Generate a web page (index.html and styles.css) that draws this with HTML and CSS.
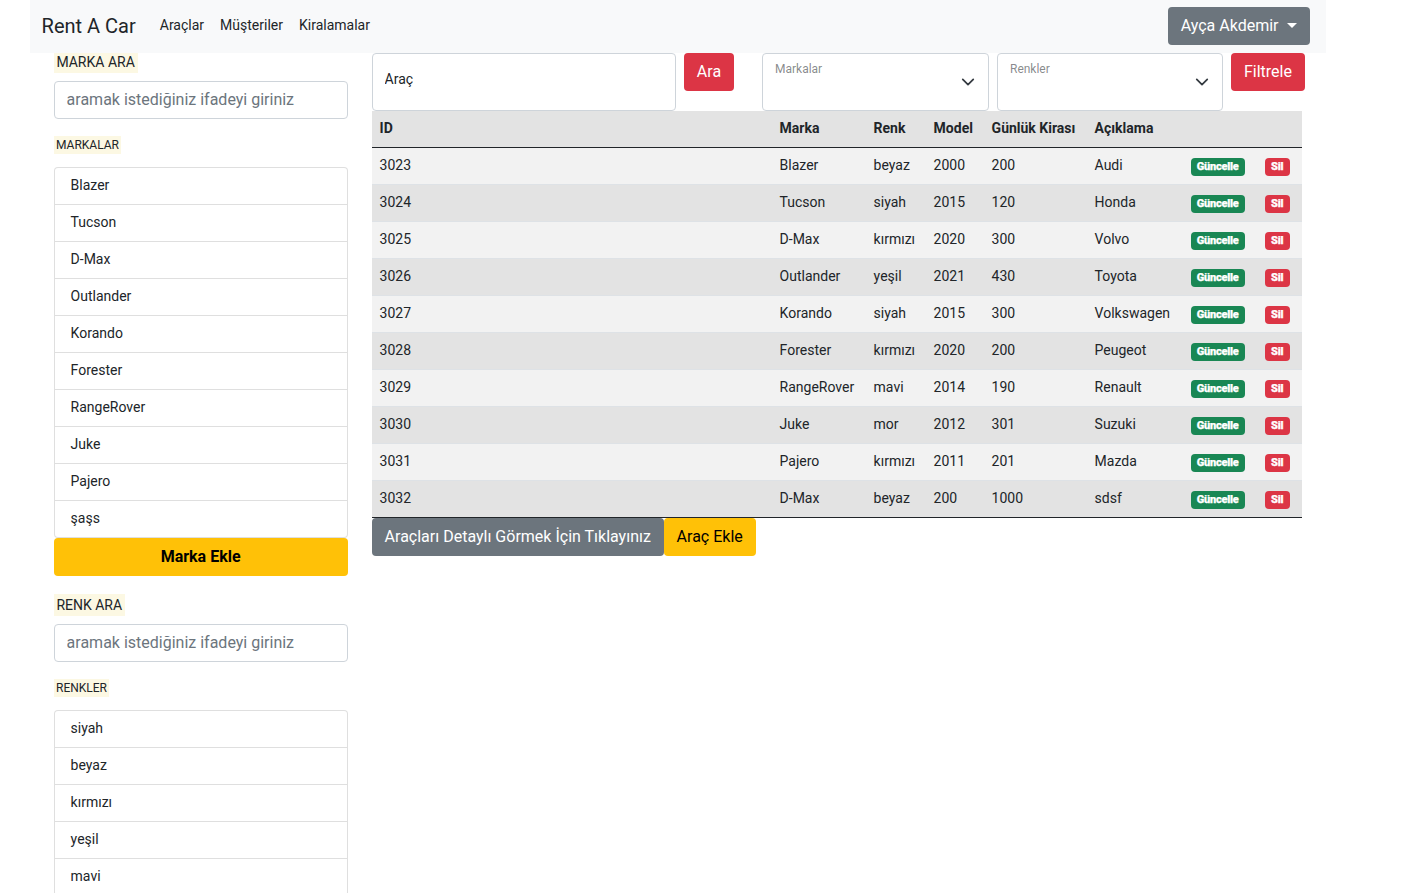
FILE: index.html
```html
<!DOCTYPE html>
<html lang="tr">
<head>
<meta charset="utf-8">
<title>Rent A Car</title>
<link rel="stylesheet" href="styles.css">
</head>
<body>
<div class="page">
  <nav class="navbar">
    <a class="brand">Rent A Car</a>
    <div class="nav-links"><a>Araçlar</a><a>Müşteriler</a><a>Kiralamalar</a></div>
    <button class="btn btn-grey user-btn">Ayça Akdemir<span class="caret"></span></button>
  </nav>
  <div class="content">
    <aside class="sidebar">
      <label class="field-label"><mark>MARKA ARA</mark></label>
      <input class="search" placeholder="aramak istediğiniz ifadeyi giriniz">
      <div class="sub-label"><mark>MARKALAR</mark></div>
      <ul class="list">
        <li>Blazer</li><li>Tucson</li><li>D-Max</li><li>Outlander</li><li>Korando</li><li>Forester</li><li>RangeRover</li><li>Juke</li><li>Pajero</li><li>şaşs</li>
      </ul>
      <button class="btn btn-yellow add-brand">Marka Ekle</button>
      <label class="field-label second"><mark>RENK ARA</mark></label>
      <input class="search" placeholder="aramak istediğiniz ifadeyi giriniz">
      <div class="sub-label"><mark>RENKLER</mark></div>
      <ul class="list">
        <li>siyah</li><li>beyaz</li><li>kırmızı</li><li>yeşil</li><li>mavi</li>
      </ul>
    </aside>
    <main class="main">
      <div class="filters">
        <input class="car-input" value="Araç">
        <button class="btn btn-red btn-search">Ara</button>
        <div class="select first-select"><span class="select-label">Markalar</span>
          <svg class="chevron" viewBox="0 0 16 16"><path d="m2 5 6 6 6-6" fill="none" stroke="#343a40" stroke-width="2" stroke-linecap="round" stroke-linejoin="round"/></svg></div>
        <div class="select"><span class="select-label">Renkler</span>
          <svg class="chevron" viewBox="0 0 16 16"><path d="m2 5 6 6 6-6" fill="none" stroke="#343a40" stroke-width="2" stroke-linecap="round" stroke-linejoin="round"/></svg></div>
        <button class="btn btn-red btn-filter">Filtrele</button>
      </div>
      <table class="cars">
        <colgroup>
          <col class="c-id"><col class="c-brand"><col class="c-color"><col class="c-model"><col class="c-rent"><col class="c-desc"><col class="c-upd"><col class="c-del">
        </colgroup>
        <thead>
          <tr><th>ID</th><th>Marka</th><th>Renk</th><th>Model</th><th>Günlük Kirası</th><th>Açıklama</th><th></th><th></th></tr>
        </thead>
        <tbody>
          <tr><td>3023</td><td>Blazer</td><td>beyaz</td><td>2000</td><td>200</td><td>Audi</td><td><a class="tag tag-green">Güncelle</a></td><td><a class="tag tag-red">Sil</a></td></tr>
          <tr><td>3024</td><td>Tucson</td><td>siyah</td><td>2015</td><td>120</td><td>Honda</td><td><a class="tag tag-green">Güncelle</a></td><td><a class="tag tag-red">Sil</a></td></tr>
          <tr><td>3025</td><td>D-Max</td><td>kırmızı</td><td>2020</td><td>300</td><td>Volvo</td><td><a class="tag tag-green">Güncelle</a></td><td><a class="tag tag-red">Sil</a></td></tr>
          <tr><td>3026</td><td>Outlander</td><td>yeşil</td><td>2021</td><td>430</td><td>Toyota</td><td><a class="tag tag-green">Güncelle</a></td><td><a class="tag tag-red">Sil</a></td></tr>
          <tr><td>3027</td><td>Korando</td><td>siyah</td><td>2015</td><td>300</td><td>Volkswagen</td><td><a class="tag tag-green">Güncelle</a></td><td><a class="tag tag-red">Sil</a></td></tr>
          <tr><td>3028</td><td>Forester</td><td>kırmızı</td><td>2020</td><td>200</td><td>Peugeot</td><td><a class="tag tag-green">Güncelle</a></td><td><a class="tag tag-red">Sil</a></td></tr>
          <tr><td>3029</td><td>RangeRover</td><td>mavi</td><td>2014</td><td>190</td><td>Renault</td><td><a class="tag tag-green">Güncelle</a></td><td><a class="tag tag-red">Sil</a></td></tr>
          <tr><td>3030</td><td>Juke</td><td>mor</td><td>2012</td><td>301</td><td>Suzuki</td><td><a class="tag tag-green">Güncelle</a></td><td><a class="tag tag-red">Sil</a></td></tr>
          <tr><td>3031</td><td>Pajero</td><td>kırmızı</td><td>2011</td><td>201</td><td>Mazda</td><td><a class="tag tag-green">Güncelle</a></td><td><a class="tag tag-red">Sil</a></td></tr>
          <tr><td>3032</td><td>D-Max</td><td>beyaz</td><td>200</td><td>1000</td><td>sdsf</td><td><a class="tag tag-green">Güncelle</a></td><td><a class="tag tag-red">Sil</a></td></tr>
        </tbody>
      </table>
      <div class="actions">
        <button class="btn btn-grey">Araçları Detaylı Görmek İçin Tıklayınız</button>
        <button class="btn btn-yellow">Araç Ekle</button>
      </div>
    </main>
  </div>
</div>
</body>
</html>
```
FILE: styles.css
```css
* { box-sizing: border-box; }
html, body { margin: 0; height: 893px; overflow: hidden; background: #fff; }
body { font-family: Roboto, "Liberation Sans", sans-serif; font-size: 14px; line-height: 21px; color: #212529; }
.page { width: 1296px; margin-left: 29.6px; }

.navbar { position: relative; z-index: 2; display: flex; align-items: flex-start; height: 53px; margin-bottom: -1px; padding: 7px 16px 0 12px; background: #f8f9fa; }
.brand { font-size: 20px; line-height: 30px; margin: 4px 24px 0 0; }
.nav-links { display: flex; gap: 16px; margin-top: 8px; }
.user-btn { margin-left: auto; width: 142px; }
.caret { display: inline-block; margin-left: 8px; vertical-align: 3px; border-top: 5px solid #fff; border-left: 5px solid transparent; border-right: 5px solid transparent; }

.btn { height: 38px; padding: 0 12px; border: 1px solid transparent; border-radius: 4px; font: 16px/24px Roboto, "Liberation Sans", sans-serif; white-space: nowrap; }
.btn-grey { background: #6c757d; color: #fff; }
.btn-red { background: #dc3545; color: #fff; }
.btn-yellow { background: #ffc107; color: #000; }

.content { display: flex; align-items: flex-start; padding-left: 24px; }
.sidebar { width: 294px; flex: none; }
.main { width: 934px; margin: 1px 0 0 24px; flex: none; }

mark { background: #fcf8e3; color: inherit; padding: 3px 2.8px; }
.field-label { display: block; margin-bottom: 8px; }
.field-label.second { margin-top: 19px; }
.search { display: block; width: 100%; height: 38px; padding: 0 12px 2px; border: 1px solid #ced4da; border-radius: 4px; font: 16px/24px Roboto, sans-serif; color: #212529; background: #fff; }
.search::placeholder { color: #6c757d; opacity: 1; }
.sub-label { margin: 16px 0 11px; font-size: 12px; }
.sub-label mark { padding: 2.4px; }

.list { list-style: none; margin: 0; padding: 0; border: 1px solid rgba(0,0,0,.125); border-radius: 4px; background: #fff; }
.list li { height: 37px; padding: 7px 16px 8px; border-bottom: 1px solid rgba(0,0,0,.125); }
.list li:last-child { height: 36px; border-bottom: 0; }
.add-brand { display: block; width: 100%; font-weight: 700; }

.filters { display: flex; align-items: flex-start; gap: 8px; height: 58px; }
.car-input { width: 304.4px; height: 58px; padding: 0 12px 6px; border: 1px solid #ced4da; border-radius: 4px; font: 14px Roboto, sans-serif; color: #212529; background: #fff; }
.btn-search { width: 50px; padding: 0; }
.btn-filter { width: 74px; padding: 0; }
.select { position: relative; width: 226px; height: 58px; padding: 6px 12px; border: 1px solid #ced4da; border-radius: 4px; background: #fff; }
.first-select { width: 227px; margin-left: 20px; }
.select-label { display: block; font-size: 12px; line-height: 18px; color: rgba(33,37,41,.55); }
.chevron { position: absolute; top: 21px; right: 13px; width: 14px; height: 14px; }

.cars { width: 930px; table-layout: fixed; border-collapse: separate; border-spacing: 0; }
.c-id { width: 400px; } .c-brand { width: 94px; } .c-color { width: 60px; } .c-model { width: 58px; }
.c-rent { width: 103px; } .c-desc { width: 96px; } .c-upd { width: 74px; } .c-del { width: 45px; }
.cars th { height: 37px; padding: 7px 8px 8px; text-align: left; font-weight: 700; background: #e3e3e3; border-bottom: 1px solid #212529; white-space: nowrap; }
.cars td { height: 37px; padding: 7px 8px 8px; vertical-align: top; background: #f2f2f2; border-bottom: 1px solid #dee2e6; white-space: nowrap; }
.cars tbody tr:nth-child(even) td { background: #e3e3e3; }
.cars tbody tr:last-child td { border-bottom: 1px solid #212529; }
.tag { display: block; height: 18px; margin-top: 3px; border-radius: 4px; text-align: center; font-size: 11px; font-weight: 900; line-height: 17px; color: #fff; letter-spacing: -.25px; -webkit-text-stroke: .25px #fff; }
.tag-green { width: 54px; background: #198754; }
.tag-red { width: 25px; background: #dc3545; }

.actions { display: flex; }
.actions .btn-grey { width: 292px; }
.actions .btn-yellow { width: 92px; }
```
